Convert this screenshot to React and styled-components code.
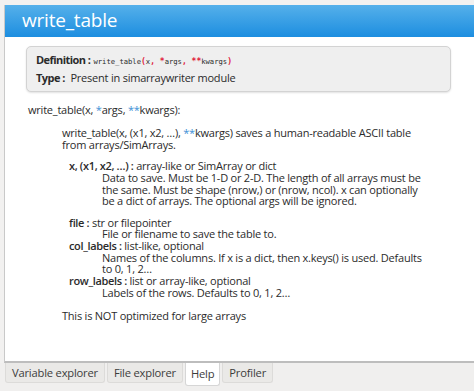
import React from "react";
import styled, { createGlobalStyle } from "styled-components";

const GlobalStyle = createGlobalStyle`
  html, body {
    margin: 0;
    padding: 0;
    background: #f2f1f0;
    font-family: "Open Sans", "Noto Sans", sans-serif;
    overflow: hidden;
  }
`;

// lines are kept as in the Help pane so that wrapping matches
const params = [
  {
    name: "x, (x1, x2, …)",
    type: "array-like or SimArray or dict",
    desc: [
      "Data to save. Must be 1-D or 2-D. The length of all arrays must be",
      "the same. Must be shape (nrow,) or (nrow, ncol). x can optionally",
      "be a dict of arrays. The optional args will be ignored.",
    ],
    gap: true,
  },
  {
    name: "file",
    type: "str or filepointer",
    desc: ["File or filename to save the table to."],
  },
  {
    name: "col_labels",
    type: "list-like, optional",
    desc: [
      "Names of the columns. If x is a dict, then x.keys() is used. Defaults",
      "to 0, 1, 2…",
    ],
  },
  {
    name: "row_labels",
    type: "list or array-like, optional",
    desc: ["Labels of the rows. Defaults to 0, 1, 2…"],
  },
];

const tabs = ["Variable explorer", "File explorer", "Help", "Profiler"];

const App = () => {
  return (
    <Window>
      <GlobalStyle />
      <Panel>
        <Header>write_table</Header>
        <Body>
          <DefBox>
            <DefRow>
              <b>Definition :</b>
              <Code>
                write_table<Op>(</Op>x<Op>, *</Op>args<Op>, **</Op>kwargs<Op>)</Op>
              </Code>
            </DefRow>
            <DefRow>
              <b>Type :</b> Present in simarraywriter module
            </DefRow>
          </DefBox>

          <Signature>
            write_table(x, <Star>*</Star>args, <Star>**</Star>kwargs):
          </Signature>

          <Doc>
            <Para>
              <Line>
                write_table(x, (x1, x2, …), <Star>**</Star>kwargs) saves a
                human-readable ASCII table
              </Line>
              <Line>from arrays/SimArrays.</Line>
            </Para>
            <ParamList>
              {params.map((p) => (
                <Param key={p.name} $gap={p.gap}>
                  <Line>
                    <b>{p.name} :</b> {p.type}
                  </Line>
                  <ParamDesc>
                    {p.desc.map((l) => (
                      <Line key={l}>{l}</Line>
                    ))}
                  </ParamDesc>
                </Param>
              ))}
            </ParamList>
            <Para>This is NOT optimized for large arrays</Para>
          </Doc>
        </Body>
      </Panel>
      <TabBar>
        {tabs.map((t) => (
          <Tab key={t} $active={t === "Help"}>
            {t}
          </Tab>
        ))}
      </TabBar>
    </Window>
  );
};

const Window = styled.div`
  width: 474px;
  height: 391px;
  display: flex;
  flex-direction: column;
  padding-top: 5px;
  box-sizing: border-box;
  background: #f2f1f0;
`;

const Panel = styled.div`
  height: 358px;
  box-sizing: border-box;
  margin-left: 4px;
  background: white;
  border-left: 1px solid #c9c9c9;
  border-bottom: 2px solid #bdbdbd;
  display: flex;
  flex-direction: column;
  overflow: hidden;
`;

const Header = styled.h1`
  margin: 0;
  height: 32px;
  padding: 0 0 2px 17px;
  box-sizing: border-box;
  display: flex;
  align-items: center;
  background: linear-gradient(#55b0ea, #1d8ee0);
  color: white;
  font-weight: 400;
  font-size: 19px;
  letter-spacing: -0.2px;
`;

const Body = styled.div`
  padding: 9px 0 0 23px;
  color: #2b2b2b;
  font-size: 11px;
  letter-spacing: -0.22px;
`;

const DefBox = styled.div`
  width: 425px;
  box-sizing: border-box;
  margin-left: -2px;
  padding: 5px 9px;
  background: #efefef;
  border: 1px solid #d3d3d3;
  border-radius: 5px;
  box-shadow: 0 1px 2px rgba(0, 0, 0, 0.12);
`;

const DefRow = styled.div`
  line-height: 16px;
  & b {
    margin-right: 3px;
    letter-spacing: -0.55px;
  }
`;

const Code = styled.span`
  font-family: "DejaVu Sans Mono", monospace;
  font-size: 7.2px;
  letter-spacing: 0;
`;

const Op = styled.span`
  color: #e0203a;
  font-weight: bold;
  font-size: 8px;
`;

const Star = styled.span`
  color: #3d8fd6;
`;

const Signature = styled.div`
  margin-top: 12px;
  line-height: 11.7px;
`;

const Doc = styled.div`
  padding-left: 34px;
  line-height: 11.7px;
`;

const Para = styled.div`
  margin: 11.6px 0 9.5px;
`;

const Line = styled.div`
  white-space: nowrap;
  & b {
    font-weight: 600;
    letter-spacing: -0.35px;
  }
`;

const ParamList = styled.div`
  padding-left: 7px;
`;

const Param = styled.div`
  margin-bottom: ${(p) => (p.$gap ? "9.5px" : "0")};
`;

const ParamDesc = styled.div`
  padding-left: 33px;
`;

const TabBar = styled.div`
  flex: 1;
  display: flex;
  gap: 2px;
  padding-left: 5px;
  background: #f0efee;
`;

const Tab = styled.div`
  height: ${(p) => (p.$active ? "23px" : "20px")};
  padding: ${(p) => (p.$active ? "4px 5px 0" : "3px 6px 0")};
  box-sizing: border-box;
  font-size: 11.2px;
  letter-spacing: -0.2px;
  line-height: 14px;
  color: #3c3c3c;
  background: ${(p) => (p.$active ? "#ffffff" : "#eae9e7")};
  border: 1px solid ${(p) => (p.$active ? "#d6d6d6" : "#dcdbd9")};
  border-top: none;
  border-radius: 0 0 3px 3px;
`;

export default App;
